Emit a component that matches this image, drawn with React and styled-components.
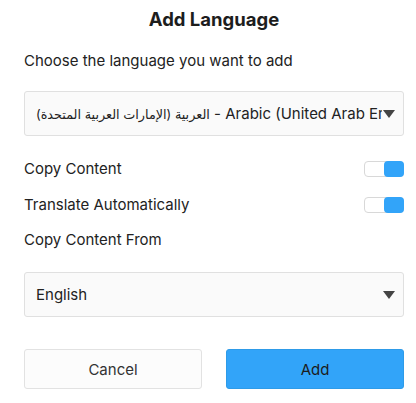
import React from "react";
import styled, { createGlobalStyle } from "styled-components";

const Global = createGlobalStyle`
  html, body { margin: 0; padding: 0; background: #fff; }
  body { font-family: Inter, "Noto Sans", sans-serif; color: #222; }
`;

const Dialog = styled.div`
  width: 416px;
  box-sizing: border-box;
  padding: 8px 12px 0 24px;
  display: flex;
  flex-direction: column;
`;

const Title = styled.h2`
  margin: 0;
  width: 380px;
  font-size: 18.5px;
  font-weight: 700;
  text-align: center;
  line-height: 22px;
  color: #1d1d1d;
`;

const Label = styled.div`
  font-size: 15px;
  line-height: 20px;
  color: #222;
`;

const Prompt = styled(Label)`
  margin-top: 21px;
`;

const SelectBox = styled.div`
  margin-top: ${(p) => p.$top}px;
  width: 380px;
  height: 45px;
  box-sizing: border-box;
  border: 1px solid #e0e0e0;
  border-radius: 3px;
  background: #fafafa;
  display: flex;
  align-items: center;
  padding: 0 8px 0 11px;
`;

const SelectText = styled.div`
  flex: 1;
  min-width: 0;
  overflow: hidden;
  white-space: nowrap;
  font-size: 15px;
  color: #222;
  font-family: Inter, "Noto Sans", "DejaVu Sans", sans-serif;
`;

const ArabicPart = styled.span`
  font-size: 12.8px;
`;

const Arrow = styled.span`
  flex: none;
  margin-left: 1px;
  width: 0;
  height: 0;
  border-left: 6px solid transparent;
  border-right: 6px solid transparent;
  border-top: 8px solid #444;
`;

const ToggleRow = styled.div`
  margin-top: ${(p) => p.$top}px;
  width: 380px;
  display: flex;
  align-items: center;
  justify-content: space-between;
`;

const Toggle = styled.span`
  width: 40px;
  height: 16px;
  box-sizing: border-box;
  border: 1px solid #d8d8d8;
  border-radius: 4px;
  background: #fff;
  display: flex;
  justify-content: flex-end;
  align-items: center;
`;

const Knob = styled.span`
  width: 20px;
  height: 16px;
  margin: -1px;
  border-radius: 4px;
  background: #32a4f9;
`;

const Buttons = styled.div`
  margin-top: 32px;
  width: 380px;
  display: grid;
  grid-template-columns: 178px 178px;
  justify-content: space-between;
`;

const Button = styled.button`
  height: 40px;
  border-radius: 3px;
  font-family: Inter, "Noto Sans", sans-serif;
  font-size: 15px;
  color: ${(p) => (p.$primary ? "#1c1c1c" : "#333")};
  background: ${(p) => (p.$primary ? "#32a4f9" : "#fcfcfc")};
  border: 1px solid ${(p) => (p.$primary ? "#2e9be8" : "#e2e2e2")};
  padding: 0;
`;

export default function App() {
  return (
    <>
      <Global />
      <Dialog>
        <Title>Add Language</Title>
        <Prompt>Choose the language you want to add</Prompt>
        <SelectBox $top={20}>
          <SelectText>
            <ArabicPart>العربية (الإمارات العربية المتحدة)</ArabicPart> - Arabic (United Arab Emirates)
          </SelectText>
          <Arrow />
        </SelectBox>
        <ToggleRow $top={23}>
          <Label>Copy Content</Label>
          <Toggle><Knob /></Toggle>
        </ToggleRow>
        <ToggleRow $top={16}>
          <Label>Translate Automatically</Label>
          <Toggle><Knob /></Toggle>
        </ToggleRow>
        <ToggleRow $top={15}>
          <Label>Copy Content From</Label>
        </ToggleRow>
        <SelectBox $top={22}>
          <SelectText>English</SelectText>
          <Arrow />
        </SelectBox>
        <Buttons>
          <Button>Cancel</Button>
          <Button $primary>Add</Button>
        </Buttons>
      </Dialog>
    </>
  );
}
